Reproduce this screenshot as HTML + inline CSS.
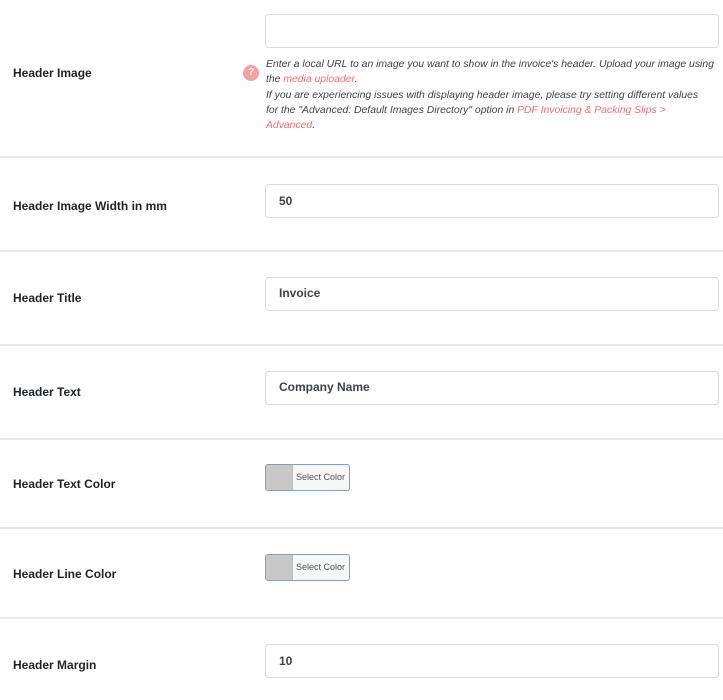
<!DOCTYPE html>
<html><head><style>
body{margin:0;width:723px;height:700px;background:#fff;font-family:"Liberation Sans",sans-serif;position:relative;overflow:hidden;color:#1d2327}
.l{position:absolute;left:13px;font-size:12px;font-weight:bold;color:#1d2327}
.sep{position:absolute;left:0;width:723px;height:2px;background:#e8e8e8}
.in{position:absolute;left:265px;width:454px;height:31px;border:1px solid #dcdcde;border-radius:4px;box-sizing:border-box;font-size:12px;font-weight:bold;padding:8px 0 0 13px;color:#3c434a}
.cb{position:absolute;left:265px;width:85px;height:27px;border:1px solid #7aa0c8;border-radius:3px;box-sizing:border-box;background:#f6f7f7;overflow:hidden}
.cb .sw{position:absolute;left:0;top:0;width:26px;height:25px;background:#c8c8c8;border-right:1px solid #bbb}
.cb .t{position:absolute;left:30px;top:7px;font-size:9px;color:#50575e}
.help{position:absolute;left:266px;top:57px;font-size:10.4px;font-style:italic;line-height:15.3px;color:#3c434a;white-space:nowrap}
.help a{color:#f07070;text-decoration:none}
.q{position:absolute;left:243px;top:65px;width:16px;height:16px;border-radius:50%;background:#f6a0a0;color:#fff;font-size:10px;font-weight:bold;text-align:center;line-height:16px}
</style></head><body>
<div class="in" style="top:14px;height:34px"></div>
<div class="l" style="top:66px">Header Image</div>
<div class="q">?</div>
<div class="help">Enter a local URL to an image you want to show in the invoice's header. Upload your image using<br>the <a>media uploader</a>.<br>If you are experiencing issues with displaying header image, please try setting different values<br>for the "Advanced: Default Images Directory" option in <a>PDF Invoicing &amp; Packing Slips &gt;<br>Advanced</a>.</div>
<div class="sep" style="top:156px"></div>
<div class="l" style="top:199px">Header Image Width in mm</div>
<div class="in" style="top:184px;height:34px;padding-top:9px">50</div>
<div class="sep" style="top:250px"></div>
<div class="l" style="top:291px">Header Title</div>
<div class="in" style="top:277px;height:34px">Invoice</div>
<div class="sep" style="top:344px"></div>
<div class="l" style="top:385px">Header Text</div>
<div class="in" style="top:371px;height:34px">Company Name</div>
<div class="sep" style="top:438px"></div>
<div class="l" style="top:477px">Header Text Color</div>
<div class="cb" style="top:464px"><div class="sw"></div><div class="t">Select Color</div></div>
<div class="sep" style="top:527px"></div>
<div class="l" style="top:567px">Header Line Color</div>
<div class="cb" style="top:554px"><div class="sw"></div><div class="t">Select Color</div></div>
<div class="sep" style="top:617px"></div>
<div class="l" style="top:658px">Header Margin</div>
<div class="in" style="top:644px;height:34px;padding-top:9px">10</div>
</body></html>
